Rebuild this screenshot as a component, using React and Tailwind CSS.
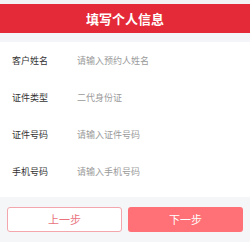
export default function App() {
  const rows = [
    { label: "客户姓名", value: "请输入预约人姓名" },
    { label: "证件类型", value: "二代身份证" },
    { label: "证件号码", value: "请输入证件号码" },
    { label: "手机号码", value: "请输入手机号码" },
  ];

  return (
    <div
      className="w-[250px] h-[242px] bg-[#f5f6f8] flex flex-col overflow-hidden"
      style={{ fontFamily: '"Noto Sans CJK SC", "Noto Sans", sans-serif' }}
    >
      <div className="h-[4px] bg-[#f2f2f4]" />
      {/* Header */}
      <div className="h-[29px] bg-[#e42a38] flex items-center justify-center">
        <span className="text-white font-bold text-[13px] leading-none">填写个人信息</span>
      </div>
      <div className="h-[9px] bg-[#f4f5f9]" />

      {/* Form */}
      <div className="bg-white pb-[7px]">
        {rows.map((row) => (
          <div key={row.label} className="h-[37px] flex items-center px-[12px]">
            <span className="w-[65px] text-[9px] text-[#333]">{row.label}</span>
            <span className="text-[9px] text-[#9a9a9a]">{row.value}</span>
          </div>
        ))}
      </div>

      {/* Buttons */}
      <div className="flex gap-[6px] px-[7px] mt-[10px]">
        <button className="w-[115px] h-[25px] rounded-[3px] border border-[#f3a7ad] bg-white text-[#e9727c] text-[11px] flex items-center justify-center">
          上一步
        </button>
        <button className="w-[115px] h-[25px] rounded-[3px] bg-[#ff7176] text-white text-[11px] flex items-center justify-center">
          下一步
        </button>
      </div>
    </div>
  );
}
